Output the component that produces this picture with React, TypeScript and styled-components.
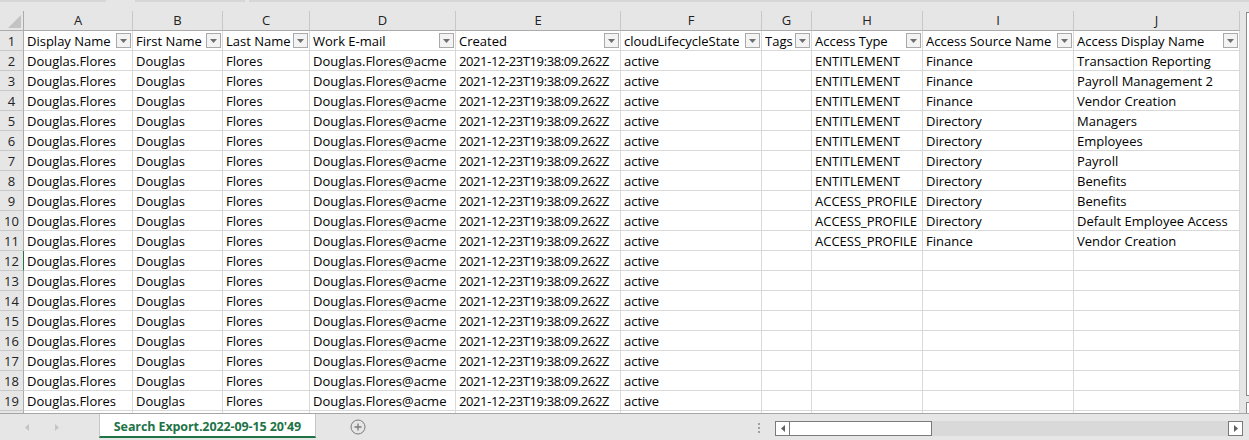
import React from "react";
import styled, { createGlobalStyle } from "styled-components";

const COLS = [24, 109, 90, 87, 146, 165, 141, 50, 111, 151, 166];
const LETTERS = ["A", "B", "C", "D", "E", "F", "G", "H", "I", "J"];
const HEADERS = [
  "Display Name",
  "First Name",
  "Last Name",
  "Work E-mail",
  "Created",
  "cloudLifecycleState",
  "Tags",
  "Access Type",
  "Access Source Name",
  "Access Display Name",
];

const ACCESS: [string, string, string][] = [
  ["ENTITLEMENT", "Finance", "Transaction Reporting"],
  ["ENTITLEMENT", "Finance", "Payroll Management 2"],
  ["ENTITLEMENT", "Finance", "Vendor Creation"],
  ["ENTITLEMENT", "Directory", "Managers"],
  ["ENTITLEMENT", "Directory", "Employees"],
  ["ENTITLEMENT", "Directory", "Payroll"],
  ["ENTITLEMENT", "Directory", "Benefits"],
  ["ACCESS_PROFILE", "Directory", "Benefits"],
  ["ACCESS_PROFILE", "Directory", "Default Employee Access"],
  ["ACCESS_PROFILE", "Finance", "Vendor Creation"],
];

const GlobalStyle = createGlobalStyle`
  html, body { margin: 0; padding: 0; background: #e6e6e6; overflow: hidden; }
  body { font-family: "Open Sans", "Noto Sans", sans-serif; color: #000; }
`;

const Window = styled.div`
  width: 1249px;
  height: 440px;
  display: flex;
  flex-direction: column;
  overflow: hidden;
  background: #e6e6e6;
`;

const TopStrip = styled.div`
  height: 11px;
  flex: none;
  display: flex;
  align-items: flex-start;
  gap: 4px;
`;

const StripSegment = styled.div<{ $w: number; $ml?: number }>`
  height: 2px;
  width: ${(p) => p.$w}px;
  margin-left: ${(p) => p.$ml ?? 0}px;
  background: #d6d6d6;
`;

const Body = styled.div`
  height: 402px;
  flex: none;
  display: flex;
  overflow: hidden;
`;

const Sheet = styled.div`
  width: 1240px;
  flex: none;
  display: grid;
  grid-template-columns: ${COLS.map((c) => c + "px").join(" ")};
  grid-auto-rows: 20px;
  background: #fff;
  overflow: hidden;
  align-content: start;
`;

const HeadBase = styled.div`
  box-sizing: border-box;
  background: #e6e6e6;
  color: #222;
  font-size: 13px;
  line-height: 19px;
  text-align: center;
  white-space: nowrap;
  overflow: hidden;
`;

const Corner = styled(HeadBase)`
  border-right: 1px solid #ababab;
  border-bottom: 1px solid #ababab;
  display: flex;
  align-items: flex-end;
  justify-content: flex-end;
  svg { display: block; margin: 0 2px 2px 0; }
`;

const ColHeader = styled(HeadBase)`
  border-right: 1px solid #c8c8c8;
  border-bottom: 1px solid #ababab;
`;

const RowHeader = styled(HeadBase)<{ $active?: boolean }>`
  border-right: 1px solid ${(p) => (p.$active ? "#217346" : "#ababab")};
  border-bottom: 1px solid #c8c8c8;
  padding-top: 1px;
  line-height: 18px;
`;

const Cell = styled.div<{ $tight?: boolean }>`
  box-sizing: border-box;
  border-right: 1px solid #d9d9d9;
  border-bottom: 1px solid #d9d9d9;
  padding: 1px 3px 0 3px;
  font-size: 13px;
  line-height: 18px;
  white-space: nowrap;
  overflow: hidden;
  letter-spacing: ${(p) => (p.$tight ? "-0.4px" : "0")};
`;

const FilterCell = styled(Cell)`
  display: flex;
  align-items: center;
  justify-content: space-between;
  padding-right: 1px;
  padding-top: 0;
`;

const FilterLabel = styled.span`
  overflow: hidden;
  white-space: nowrap;
  padding-top: 1px;
`;

const FilterButton = styled.div`
  flex: none;
  box-sizing: border-box;
  width: 15px;
  height: 15px;
  border: 1px solid #a9a9a9;
  background: #f3f3f3;
  display: flex;
  align-items: center;
  justify-content: center;
  margin-left: 2px;
`;

const VScroll = styled.div`
  width: 9px;
  flex: none;
  display: flex;
  flex-direction: column;
  padding: 1px 0 0 6px;
  box-sizing: border-box;
  gap: 6px;
  overflow: hidden;
`;

const VThumb = styled.div<{ $h: number }>`
  width: 12px;
  height: ${(p) => p.$h}px;
  flex: none;
  box-sizing: border-box;
  border: 1px solid #8a8a8a;
  background: #fff;
`;

const TabBar = styled.div`
  flex: 1;
  display: flex;
  align-items: flex-start;
  border-top: 1px solid #a6a6a6;
  background: #e6e6e6;
`;

const Nav = styled.div`
  width: 99px;
  height: 25px;
  flex: none;
  display: flex;
  align-items: center;
  padding: 2px 0 0 25px;
  gap: 26px;
  box-sizing: border-box;
`;

const Tab = styled.div`
  width: 217px;
  height: 24px;
  flex: none;
  box-sizing: border-box;
  background: #fff;
  border-left: 1px solid #c6c6c6;
  border-right: 1px solid #c6c6c6;
  border-bottom: 2px solid #217346;
  color: #217346;
  font-weight: 700;
  font-size: 12.5px;
  letter-spacing: -0.1px;
  display: flex;
  align-items: center;
  justify-content: center;
  padding-top: 2px;
  white-space: nowrap;
`;

const AddButton = styled.div`
  margin: 5px 0 0 34px;
  width: 16px;
  height: 16px;
  flex: none;
  svg { display: block; }
`;

const Dots = styled.div`
  margin: 9px 0 0 391px;
  width: 4px;
  flex: none;
  display: flex;
  flex-direction: column;
  align-items: center;
  gap: 2px;
`;

const Dot = styled.div`
  width: 2px;
  height: 2px;
  background: #a0a0a0;
`;

const HScroll = styled.div`
  margin: 7px 0 0 14px;
  width: 468px;
  height: 15px;
  flex: none;
  display: flex;
`;

const ArrowBox = styled.div`
  width: 15px;
  height: 15px;
  flex: none;
  box-sizing: border-box;
  border: 1px solid #7a7a7a;
  background: #fff;
  display: flex;
  align-items: center;
  justify-content: center;
  svg { display: block; }
`;

const HThumb = styled.div`
  width: 142px;
  flex: none;
  box-sizing: border-box;
  border: 1px solid #7a7a7a;
  border-left: none;
  background: #fff;
`;

const Track = styled.div`
  flex: 1;
  background: #d9d9d9;
`;

const Tri = ({ dir, color, w, h }: { dir: "l" | "r" | "d"; color: string; w: number; h: number }) => {
  const pts =
    dir === "d"
      ? `0,0 ${w},0 ${w / 2},${h}`
      : dir === "l"
      ? `${w},0 ${w},${h} 0,${h / 2}`
      : `0,0 0,${h} ${w},${h / 2}`;
  return (
    <svg width={w} height={h} viewBox={`0 0 ${w} ${h}`}>
      <polygon points={pts} fill={color} />
    </svg>
  );
};

function rowValues(r: number): string[] {
  if (r > 19) return Array.from({ length: 10 }, () => "");
  const acc = r >= 2 && r <= 11 ? ACCESS[r - 2] : ["", "", ""];
  return [
    "Douglas.Flores",
    "Douglas",
    "Flores",
    "Douglas.Flores@acme",
    "2021-12-23T19:38:09.262Z",
    "active",
    "",
    acc[0],
    acc[1],
    acc[2],
  ];
}

export default function App() {
  const rows = Array.from({ length: 19 }, (_, i) => i + 2);
  return (
    <>
      <GlobalStyle />
      <Window>
        <TopStrip>
          <StripSegment $w={106} />
          <StripSegment $w={110} $ml={25} />
          <StripSegment $w={1000} />
        </TopStrip>
        <Body>
          <Sheet>
            <Corner>
              <svg width="13" height="13" viewBox="0 0 13 13">
                <polygon points="13,0 13,13 0,13" fill="#c3c3c3" />
              </svg>
            </Corner>
            {LETTERS.map((l) => (
              <ColHeader key={l}>{l}</ColHeader>
            ))}
            <RowHeader>1</RowHeader>
            {HEADERS.map((h) => (
              <FilterCell key={h}>
                <FilterLabel>{h}</FilterLabel>
                <FilterButton>
                  <Tri dir="d" color="#6e6e6e" w={7} h={4} />
                </FilterButton>
              </FilterCell>
            ))}
            {rows.map((r) => (
              <React.Fragment key={r}>
                <RowHeader $active={r === 12}>{r <= 19 ? r : ""}</RowHeader>
                {rowValues(r).map((v, i) => (
                  <Cell key={i} $tight={i === 4}>
                    {v}
                  </Cell>
                ))}
              </React.Fragment>
            ))}
          </Sheet>
          <VScroll>
            <VThumb $h={384} />
            <VThumb $h={15} />
          </VScroll>
        </Body>
        <TabBar>
          <Nav>
            <Tri dir="l" color="#c4c4c4" w={4} h={7} />
            <Tri dir="r" color="#c4c4c4" w={4} h={7} />
          </Nav>
          <Tab>Search Export.2022-09-15 20'49</Tab>
          <AddButton>
            <svg width="16" height="16" viewBox="0 0 16 16">
              <circle cx="8" cy="8" r="7" fill="none" stroke="#7a7a7a" strokeWidth="1" />
              <path d="M8 4.5v7M4.5 8h7" stroke="#7a7a7a" strokeWidth="1.3" />
            </svg>
          </AddButton>
          <Dots>
            <Dot />
            <Dot />
            <Dot />
          </Dots>
          <HScroll>
            <ArrowBox>
              <Tri dir="l" color="#606060" w={4} h={7} />
            </ArrowBox>
            <HThumb />
            <Track />
            <ArrowBox>
              <Tri dir="r" color="#606060" w={4} h={7} />
            </ArrowBox>
          </HScroll>
        </TabBar>
      </Window>
    </>
  );
}
